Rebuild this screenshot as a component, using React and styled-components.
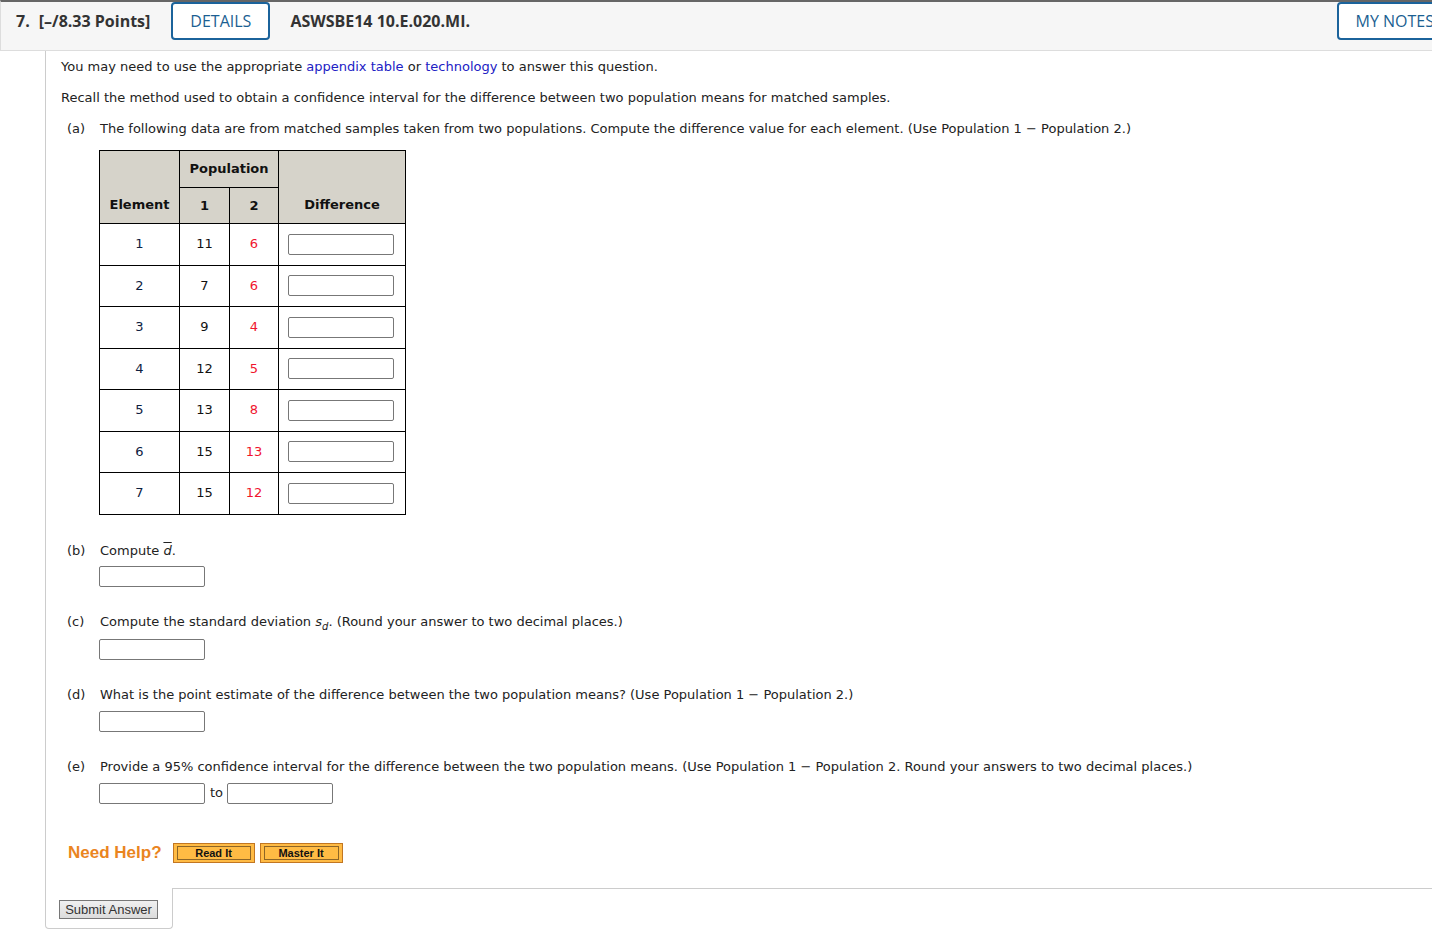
import styled, { createGlobalStyle } from 'styled-components';

const GlobalStyle = createGlobalStyle`
    html, body {
        margin: 0;
        padding: 0;
        background: #fff;
    }
    body {
        font-family: "DejaVu Sans", Verdana, sans-serif;
        font-size: 13px;
        color: #222;
        overflow: hidden;
    }
`;

const Header = styled.header`
    display: flex;
    align-items: flex-start;
    height: 48px;
    border-top: 2px solid #666;
    border-bottom: 1px solid #ddd;
    border-left: 1px solid #ddd;
    background: #f6f6f6;
    overflow: hidden;
    font-family: "Open Sans", sans-serif;
    font-size: 16px;
    color: #333;
`;

const HeadText = styled.span`
    font-weight: 700;
    line-height: 38px;
    margin-left: ${props => props.$ml || 0}px;
    white-space: nowrap;
`;

const OutlineButton = styled.button`
    height: 38px;
    box-sizing: border-box;
    margin-left: ${props => props.$ml || 0}px;
    margin-right: ${props => props.$mr || 0}px;
    padding: 0 17px;
    border: 2px solid #1b639b;
    border-radius: 4px;
    background: #fff;
    color: #1b5f92;
    font-family: "Open Sans", sans-serif;
    font-size: 16px;
    white-space: nowrap;
`;

const Body = styled.div`
    margin-left: 45px;
`;

const Content = styled.div`
    border-left: 1px solid #ccc;
    padding: 8px 0 25px 15px;
`;

const Para = styled.p`
    margin: 0 0 15px;
    line-height: 16px;
`;

const Link = styled.a`
    color: #2121c4;
    text-decoration: none;
`;

const Part = styled.div`
    display: grid;
    grid-template-columns: 33px 1fr;
    margin-left: 6px;
    margin-top: ${props => props.$mt || 0}px;
    line-height: 16px;
`;

const Label = styled.span``;

const PartBody = styled.div`
    display: flex;
    flex-direction: column;
    align-items: flex-start;
    gap: ${props => props.$gap || 8}px;
`;

const Table = styled.table`
    border-collapse: collapse;
    margin-left: -1px;
    margin-top: 13px;
    border: 1px solid #000;
    td, th {
        border: 1px solid #000;
        text-align: center;
        padding: 0;
    }
    th {
        background: #d6d3ca;
        font-weight: 700;
        color: #111;
    }
`;

const Cell = styled.td`
    height: 40.5px;
    color: ${props => props.$color || '#111'};
`;

const InputCell = styled.td`
    text-align: left !important;
    padding: 0 9px 0 10px !important;
`;

const Answer = styled.input`
    display: block;
    width: 106px;
    height: 21px;
    box-sizing: border-box;
    border: 1px solid #777;
    border-radius: 2px;
    margin: 0 0 0 -1px;
    padding: 0 3px;
    background: #fff;
`;

const Row = styled.div`
    display: flex;
    align-items: center;
    gap: 5px;
`;

const Var = styled.i`
    font-family: "DejaVu Sans", Verdana, sans-serif;
`;

const Bar = styled.i`
    text-decoration: overline;
`;

const Sub = styled.sub`
    font-size: 10px;
    font-style: italic;
    line-height: 0;
    vertical-align: -4px;
`;

const Help = styled.div`
    display: flex;
    align-items: center;
    gap: 5px;
    margin: 39px 0 0 7px;
`;

const HelpTitle = styled.span`
    font-family: "Liberation Sans", Arial, sans-serif;
    font-size: 17px;
    font-weight: 700;
    color: #ea851f;
    margin-right: 6px;
`;

const HelpButton = styled.button`
    width: ${props => props.$w}px;
    height: 20px;
    box-sizing: border-box;
    padding: 2px 3px;
    border: 1px solid #c27621;
    background: #ffbb44;
    display: flex;
`;

const HelpInner = styled.span`
    flex: 1;
    border: 1px solid #8d6526;
    display: flex;
    align-items: center;
    justify-content: center;
    font-family: "Liberation Sans", Arial, sans-serif;
    font-size: 11px;
    font-weight: 700;
    color: #111;
`;

const Footer = styled.div`
    display: flex;
`;

const Tab = styled.div`
    width: 128px;
    height: 41px;
    box-sizing: border-box;
    border: 1px solid #ccc;
    border-top: none;
    border-radius: 0 0 4px 4px;
    padding: 12px 0 0 13px;
`;

const Filler = styled.div`
    flex: 1;
    border-top: 1px solid #ccc;
`;

const SubmitButton = styled.button`
    height: 19px;
    width: 99px;
    box-sizing: border-box;
    padding: 0;
    border: 1px solid #777;
    background: linear-gradient(#f0f0f0, #dcdcdc);
    font-family: "Liberation Sans", Arial, sans-serif;
    font-size: 13px;
    color: #333;
`;

const rows = [
    [1, 11, 6],
    [2, 7, 6],
    [3, 9, 4],
    [4, 12, 5],
    [5, 13, 8],
    [6, 15, 13],
    [7, 15, 12],
];

export default function App() {
    return (
        <>
            <GlobalStyle />
            <Header>
                <HeadText $ml={15}>7.</HeadText>
                <HeadText $ml={9}>[–/8.33 Points]</HeadText>
                <OutlineButton $ml={21}>DETAILS</OutlineButton>
                <HeadText $ml={20}>ASWSBE14 10.E.020.MI.</HeadText>
                <OutlineButton style={{ marginLeft: 'auto' }} $mr={-21}>MY NOTES</OutlineButton>
            </Header>
            <Body>
                <Content>
                    <Para>
                        You may need to use the appropriate <Link href="#">appendix table</Link> or <Link href="#">technology</Link> to answer this question.
                    </Para>
                    <Para>Recall the method used to obtain a confidence interval for the difference between two population means for matched samples.</Para>
                    <Part>
                        <Label>(a)</Label>
                        <div>
                            <div>The following data are from matched samples taken from two populations. Compute the difference value for each element. (Use Population 1 − Population 2.)</div>
                            <Table>
                                <thead>
                                    <tr style={{ height: 37 }}>
                                        <th rowSpan={2} style={{ width: 79, verticalAlign: 'bottom', paddingBottom: 10 }}>Element</th>
                                        <th colSpan={2}>Population</th>
                                        <th rowSpan={2} style={{ width: 126, verticalAlign: 'bottom', paddingBottom: 10 }}>Difference</th>
                                    </tr>
                                    <tr style={{ height: 36 }}>
                                        <th style={{ width: 49 }}>1</th>
                                        <th style={{ width: 48 }}>2</th>
                                    </tr>
                                </thead>
                                <tbody>
                                    {rows.map(([el, a, b]) => (
                                        <tr key={el}>
                                            <Cell $color="#0d2040">{el}</Cell>
                                            <Cell>{a}</Cell>
                                            <Cell $color="#f0142e">{b}</Cell>
                                            <InputCell><Answer /></InputCell>
                                        </tr>
                                    ))}
                                </tbody>
                            </Table>
                        </div>
                    </Part>
                    <Part $mt={28}>
                        <Label>(b)</Label>
                        <PartBody $gap={7}>
                            <span>Compute <Bar>d</Bar>.</span>
                            <Answer />
                        </PartBody>
                    </Part>
                    <Part $mt={27}>
                        <Label>(c)</Label>
                        <PartBody $gap={9}>
                            <span>Compute the standard deviation <Var>s</Var><Sub>d</Sub>. (Round your answer to two decimal places.)</span>
                            <Answer />
                        </PartBody>
                    </Part>
                    <Part $mt={27}>
                        <Label>(d)</Label>
                        <PartBody $gap={8}>
                            <span>What is the point estimate of the difference between the two population means? (Use Population 1 − Population 2.)</span>
                            <Answer />
                        </PartBody>
                    </Part>
                    <Part $mt={27}>
                        <Label>(e)</Label>
                        <PartBody $gap={8}>
                            <span>Provide a 95% confidence interval for the difference between the two population means. (Use Population 1 − Population 2. Round your answers to two decimal places.)</span>
                            <Row>
                                <Answer />
                                <span>to</span>
                                <Answer />
                            </Row>
                        </PartBody>
                    </Part>
                    <Help>
                        <HelpTitle>Need Help?</HelpTitle>
                        <HelpButton $w={82}><HelpInner>Read It</HelpInner></HelpButton>
                        <HelpButton $w={83}><HelpInner>Master It</HelpInner></HelpButton>
                    </Help>
                </Content>
                <Footer>
                    <Tab>
                        <SubmitButton>Submit Answer</SubmitButton>
                    </Tab>
                    <Filler />
                </Footer>
            </Body>
        </>
    );
}
